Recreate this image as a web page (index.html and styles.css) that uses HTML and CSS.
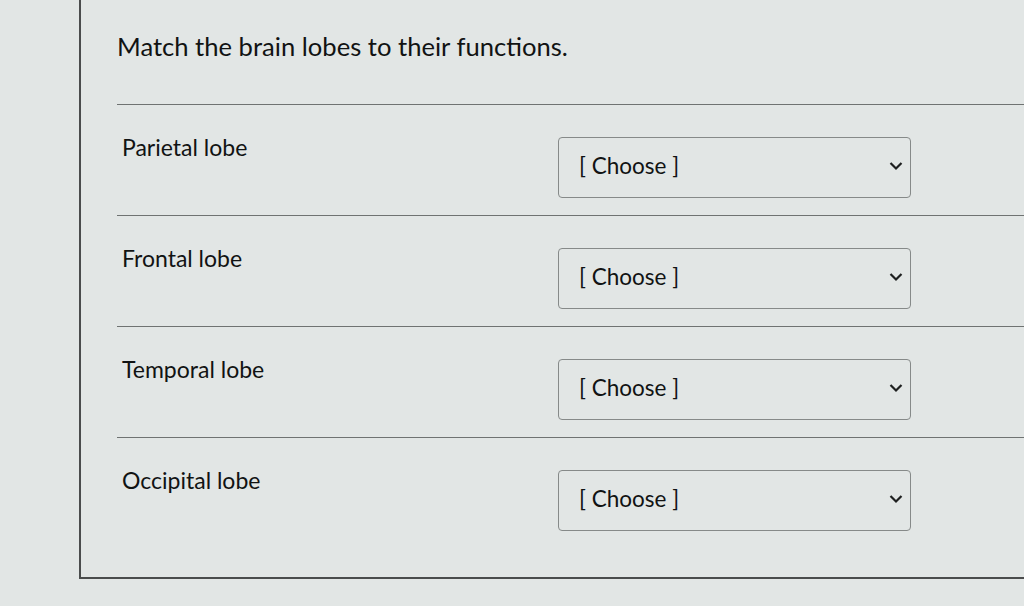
FILE: index.html
```html
<!DOCTYPE html>
<html lang="en">

<head>
    <meta charset="UTF-8">
    <meta name="viewport" content="width=device-width, initial-scale=1.0">
    <title>Quiz question</title>
    <link rel="stylesheet" href="styles.css">
</head>

<body>
    <div class="question">
        <h2 class="title">Match the brain lobes to their functions.</h2>
        <div class="answers">
            <div class="row">
                <span class="label">Parietal lobe</span>
                <div class="select"><span>[ Choose ]</span>
                    <svg width="16" height="10" viewBox="0 0 16 10"><path d="M2.5 2 L8 7.5 L13.5 2" /></svg>
                </div>
            </div>
            <div class="row">
                <span class="label">Frontal lobe</span>
                <div class="select"><span>[ Choose ]</span>
                    <svg width="16" height="10" viewBox="0 0 16 10"><path d="M2.5 2 L8 7.5 L13.5 2" /></svg>
                </div>
            </div>
            <div class="row">
                <span class="label">Temporal lobe</span>
                <div class="select"><span>[ Choose ]</span>
                    <svg width="16" height="10" viewBox="0 0 16 10"><path d="M2.5 2 L8 7.5 L13.5 2" /></svg>
                </div>
            </div>
            <div class="row">
                <span class="label">Occipital lobe</span>
                <div class="select"><span>[ Choose ]</span>
                    <svg width="16" height="10" viewBox="0 0 16 10"><path d="M2.5 2 L8 7.5 L13.5 2" /></svg>
                </div>
            </div>
        </div>
    </div>
</body>

</html>
```

FILE: styles.css
```css
body {
    margin: 0;
    background: #e2e6e5;
    font-family: Lato, "Liberation Sans", sans-serif;
    color: #111313;
}

.question {
    margin-left: 79px;
    height: 579px;
    border-left: 2px solid #4a4c4c;
    border-bottom: 2px solid #4a4c4c;
    padding-left: 36px;
    box-sizing: border-box;
}

.title {
    margin: 0;
    padding-top: 30px;
    font-size: 25.6px;
    font-weight: normal;
    line-height: 32px;
    height: 74px;
}

.row {
    display: flex;
    align-items: flex-start;
    border-top: 1.5px solid #6f7372;
    height: 111px;
    box-sizing: border-box;
    padding-top: 32px;
}

.label {
    width: 436px;
    padding-left: 5px;
    font-size: 23px;
    line-height: 20px;
}

.select {
    display: flex;
    align-items: center;
    justify-content: space-between;
    width: 353px;
    height: 61px;
    box-sizing: border-box;
    border: 1.5px solid #868a89;
    border-radius: 4px;
    padding: 0 6px 4px 20px;
    font-size: 22.5px;
}

.select svg path {
    fill: none;
    stroke: #1e2020;
    stroke-width: 2.2;
}
```
